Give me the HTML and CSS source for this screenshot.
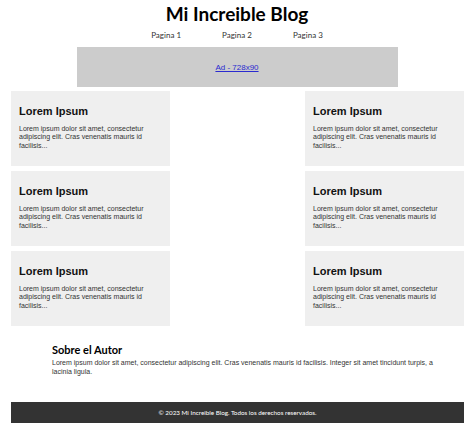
FILE: index.html
```html
<!DOCTYPE html>
<html lang="es">
<head>
<meta charset="utf-8">
<title>Mi Increible Blog</title>
<link rel="stylesheet" href="styles.css">
</head>
<body>
<header class="site-header">
  <h1 class="site-title">Mi Increible Blog</h1>
  <nav class="site-nav">
    <a class="nav-link" href="#">Pagina 1</a>
    <a class="nav-link" href="#">Pagina 2</a>
    <a class="nav-link" href="#">Pagina 3</a>
  </nav>
</header>
<div class="ad-banner"><a class="ad-link" href="#">Ad - 728x90</a></div>
<main class="posts">
  <article class="card col-left"><h2 class="card-title">Lorem Ipsum</h2><p class="card-text">Lorem ipsum dolor sit amet, consectetur adipiscing elit. Cras venenatis mauris id facilisis...</p></article>
  <article class="card col-right"><h2 class="card-title">Lorem Ipsum</h2><p class="card-text">Lorem ipsum dolor sit amet, consectetur adipiscing elit. Cras venenatis mauris id facilisis...</p></article>
  <article class="card col-left"><h2 class="card-title">Lorem Ipsum</h2><p class="card-text">Lorem ipsum dolor sit amet, consectetur adipiscing elit. Cras venenatis mauris id facilisis...</p></article>
  <article class="card col-right"><h2 class="card-title">Lorem Ipsum</h2><p class="card-text">Lorem ipsum dolor sit amet, consectetur adipiscing elit. Cras venenatis mauris id facilisis...</p></article>
  <article class="card col-left"><h2 class="card-title">Lorem Ipsum</h2><p class="card-text">Lorem ipsum dolor sit amet, consectetur adipiscing elit. Cras venenatis mauris id facilisis...</p></article>
  <article class="card col-right"><h2 class="card-title">Lorem Ipsum</h2><p class="card-text">Lorem ipsum dolor sit amet, consectetur adipiscing elit. Cras venenatis mauris id facilisis...</p></article>
</main>
<section class="author">
  <h3 class="author-title">Sobre el Autor</h3>
  <p class="author-text">Lorem ipsum dolor sit amet, consectetur adipiscing elit. Cras venenatis mauris id facilisis. Integer sit amet tincidunt turpis, a lacinia ligula.</p>
</section>
<footer class="site-footer">© 2023 Mi Increible Blog. Todos los derechos reservados.</footer>
</body>
</html>
```
FILE: styles.css
```css
html, body { margin: 0; padding: 0; background: #fff; }
body { font-family: "Liberation Sans", Arial, sans-serif; color: #222; width: 474px; }

.site-header { text-align: center; padding-top: 2px; }
.site-title {
  font-family: Lato, "Open Sans", sans-serif;
  font-weight: 700;
  font-size: 19px;
  line-height: 24px;
  margin: 0;
  color: #000;
}
.site-nav {
  display: flex;
  justify-content: center;
  gap: 41px;
  margin-top: 3px;
  line-height: 12px;
}
.nav-link {
  font-family: Lato, "Open Sans", sans-serif;
  font-size: 8px;
  color: #333;
  text-decoration: none;
}

.ad-banner {
  width: 321px;
  height: 40px;
  margin: 6px auto 0;
  background: #cccccc;
  display: flex;
  align-items: center;
  justify-content: center;
}
.ad-link {
  font-size: 8px;
  color: #2a2ad0;
  text-decoration: underline;
}

.posts {
  display: grid;
  grid-template-columns: 159px 1fr 159px;
  row-gap: 5px;
  margin: 4px 10px 0 11px;
  grid-auto-flow: row dense;
}
.col-left { grid-column: 1; }
.col-right { grid-column: 3; }
.card {
  background: #efefef;
  padding: 8px;
}
.card-title {
  font-size: 11px;
  font-weight: 700;
  margin: 6px 0 7px;
  color: #111;
  line-height: 12.6px;
}
.card-text {
  font-size: 7px;
  line-height: 8.8px;
  margin: 0 0 7px;
  color: #333;
}

.author { padding: 17px 20px 0 52px; }
.author-title {
  font-family: Lato, "Open Sans", sans-serif;
  font-weight: 700;
  font-size: 11px;
  line-height: 14px;
  margin: 0 0 2px;
  color: #000;
}
.author-text {
  font-size: 7px;
  line-height: 8.6px;
  margin: 0;
  color: #333;
}

.site-footer {
  margin: 26px 10px 0 11px;
  height: 21px;
  background: #333333;
  color: #fff;
  font-family: Lato, sans-serif;
  font-size: 6.3px;
  display: flex;
  align-items: center;
  justify-content: center;
}
```
